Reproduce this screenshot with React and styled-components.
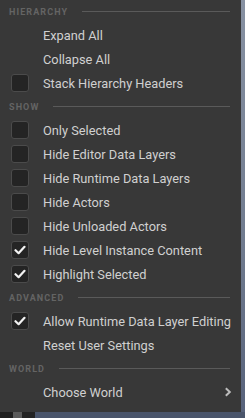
import React from 'react'
import styled, { createGlobalStyle } from 'styled-components'

const GlobalStyle = createGlobalStyle`
  html, body { margin: 0; padding: 0; }
  body {
    width: 245px;
    height: 418px;
    overflow: hidden;
    background:
      linear-gradient(to right, #1f1f1f 0 13px, #5b5b5b 13px 22px, #232323 22px 35px, #4a556b 35px) bottom / 100% 6px no-repeat,
      linear-gradient(to bottom, #8791a2, #6f7a8e 60%, #56617a);
    font-family: Roboto, "Noto Sans", sans-serif;
  }
`

const menu = [
  { title: 'Hierarchy', items: [
    { label: 'Expand All' },
    { label: 'Collapse All' },
    { label: 'Stack Hierarchy Headers', check: false },
  ] },
  { title: 'Show', items: [
    { label: 'Only Selected', check: false },
    { label: 'Hide Editor Data Layers', check: false },
    { label: 'Hide Runtime Data Layers', check: false },
    { label: 'Hide Actors', check: false },
    { label: 'Hide Unloaded Actors', check: false },
    { label: 'Hide Level Instance Content', check: true },
    { label: 'Highlight Selected', check: true },
  ] },
  { title: 'Advanced', items: [
    { label: 'Allow Runtime Data Layer Editing', check: true },
    { label: 'Reset User Settings' },
  ] },
  { title: 'World', items: [
    { label: 'Choose World', sub: true },
  ] },
]

const Check = ({ on }) => (
  <CheckBox>
    {on ? (
      <svg width="12" height="10" viewBox="0 0 12 10">
        <path d="M1.5 5.2 L4.6 8.2 L10.5 1.8" fill="none" stroke="#f2f2f2" strokeWidth="2.2" strokeLinecap="round" strokeLinejoin="round" />
      </svg>
    ) : null}
  </CheckBox>
)

const App = () => {
  return (
    <>
      <GlobalStyle />
      <Panel>
        {menu.map((section) => (
          <div key={section.title}>
            <Header>
              <span>{section.title}</span>
              <div className='line'></div>
            </Header>
            {section.items.map((item) => (
              <Item key={item.label}>
                <Slot>{item.check !== undefined ? <Check on={item.check} /> : null}</Slot>
                <Label>{item.label}</Label>
                {item.sub ? (
                  <Chevron width="8" height="10" viewBox="0 0 8 10">
                    <path d="M1.8 1.2 L5.8 5 L1.8 8.8" fill="none" stroke="#bdbdbd" strokeWidth="2" strokeLinejoin="miter" />
                  </Chevron>
                ) : null}
              </Item>
            ))}
          </div>
        ))}
      </Panel>
    </>
  )
}

const Panel = styled.div`
  width: 241px;
  height: 412px;
  box-sizing: border-box;
  background-color: #383838;
  padding-bottom: 8px;
  overflow: hidden;
`

const Header = styled.div`
  height: 23px;
  display: flex;
  align-items: center;
  gap: 14px;
  padding: 0 11px 0 9px;
  span {
    font-size: 9px;
    font-weight: 700;
    letter-spacing: 1.1px;
    text-transform: uppercase;
    color: #646464;
    white-space: nowrap;
  }
  .line {
    flex: 1;
    height: 1px;
    background-color: #5a5a5a;
  }
`

const Item = styled.div`
  height: 24px;
  display: flex;
  align-items: center;
  padding: 0 8px 0 11px;
`

const Slot = styled.div`
  width: 18px;
  height: 18px;
  margin-right: 14px;
  flex-shrink: 0;
`

const CheckBox = styled.div`
  width: 18px;
  height: 18px;
  box-sizing: border-box;
  border: 1px solid #4b4b4b;
  border-radius: 3px;
  background-color: #242424;
  display: flex;
  align-items: center;
  justify-content: center;
`

const Label = styled.span`
  flex: 1;
  font-size: 12.8px;
  color: #d0d0d0;
  white-space: nowrap;
`

const Chevron = styled.svg`
  flex-shrink: 0;
  margin-right: 1px;
`

export default App
